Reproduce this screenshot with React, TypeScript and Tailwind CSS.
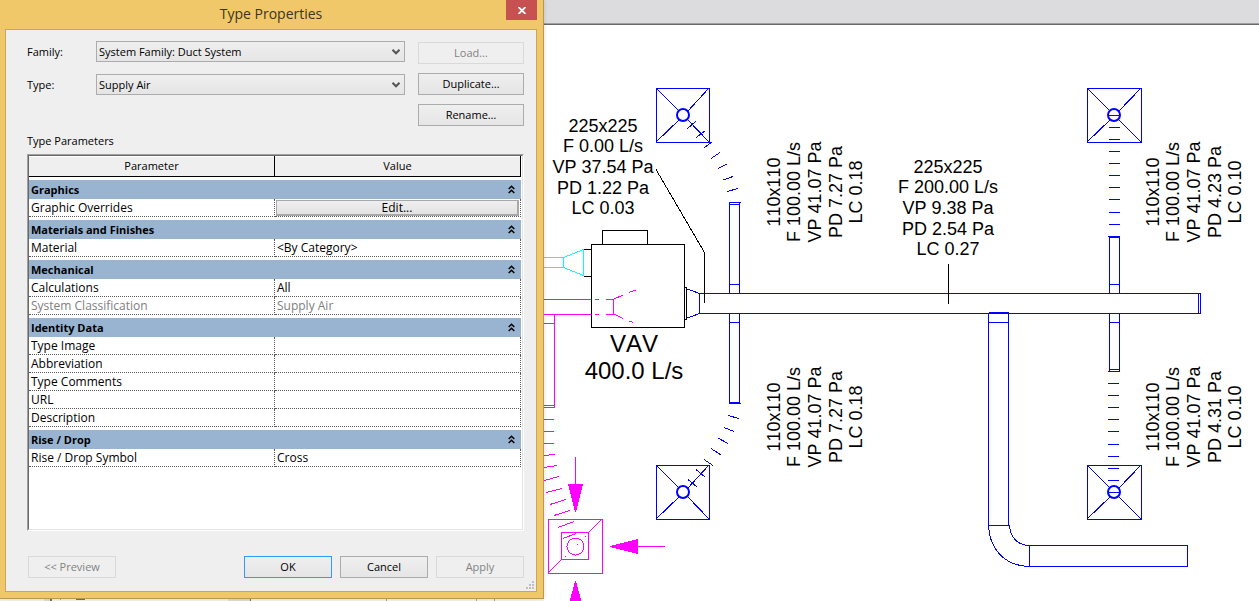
import { useState, type ReactNode } from "react";

const UI_FONT = "font-['Open_Sans','Noto_Sans',sans-serif]";

type Param = { name: string; value?: string; muted?: boolean; edit?: boolean };
type Section = { title: string; params: Param[] };

const sections: Section[] = [
  { title: "Graphics", params: [{ name: "Graphic Overrides", edit: true }] },
  { title: "Materials and Finishes", params: [{ name: "Material", value: "<By Category>" }] },
  {
    title: "Mechanical",
    params: [
      { name: "Calculations", value: "All" },
      { name: "System Classification", value: "Supply Air", muted: true },
    ],
  },
  {
    title: "Identity Data",
    params: [
      { name: "Type Image" },
      { name: "Abbreviation" },
      { name: "Type Comments" },
      { name: "URL" },
      { name: "Description" },
    ],
  },
  { title: "Rise / Drop", params: [{ name: "Rise / Drop Symbol", value: "Cross" }] },
];

function DialogButton({
  children,
  disabled,
  primary,
  wide,
}: {
  children: ReactNode;
  disabled?: boolean;
  primary?: boolean;
  wide?: boolean;
}) {
  const look = disabled
    ? "border-[#d9d9d9] bg-[#efefef] text-[#838383]"
    : primary
      ? "border-[#3399ff] bg-linear-to-b from-[#efefef] to-[#e5e5e5] text-black"
      : "border-[#acacac] bg-linear-to-b from-[#efefef] to-[#e5e5e5] text-black";
  return (
    <button
      type="button"
      disabled={disabled}
      className={`flex h-[22px] items-center justify-center border text-[11px] leading-4 ${wide ? "w-[106px]" : "w-[88px]"} ${look}`}
    >
      {children}
    </button>
  );
}

function SelectRow({ id, label, value }: { id: string; label: string; value: string }) {
  return (
    <div className="flex items-center">
      <label htmlFor={id} className="w-[69px] text-[11px] leading-4">
        {label}
      </label>
      <div className="relative flex-1">
        <select
          id={id}
          className="block h-[21px] w-full appearance-none border border-[#acacac] bg-linear-to-b from-[#efefef] to-[#e5e5e5] pl-[2px] text-[11px] leading-4 text-black"
        >
          <option>{value}</option>
        </select>
        <svg
          className="pointer-events-none absolute top-[8px] right-[5px]"
          width="8"
          height="6"
          viewBox="0 0 8 6"
        >
          <path d="M0.5 0.8 L4 4.3 L7.5 0.8" fill="none" stroke="#555" strokeWidth="2" />
        </svg>
      </div>
    </div>
  );
}

function CollapseIcon() {
  return (
    <svg width="7" height="9" viewBox="0 0 7 9" fill="none" stroke="#000" strokeWidth="1.5">
      <path d="M0.7 4 L3.5 1.2 L6.3 4 M0.7 8 L3.5 5.2 L6.3 8" />
    </svg>
  );
}

function ParameterTable() {
  const [closed, setClosed] = useState<string[]>([]);
  const toggle = (title: string) =>
    setClosed((c) => (c.includes(title) ? c.filter((t) => t !== title) : [...c, title]));
  return (
    <table className="w-[492px] table-fixed border-separate border-spacing-0 text-[12px] leading-4">
      <thead>
        <tr className="bg-[#efefef]">
          <th className="h-[21px] w-[246px] border-r border-b border-black p-0 text-[11px] font-normal shadow-[inset_0_1px_0_#fff]">
            Parameter
          </th>
          <th className="h-[21px] border-r border-b border-black p-0 text-[11px] font-normal shadow-[inset_0_1px_0_#fff]">
            Value
          </th>
        </tr>
      </thead>
      {sections.map((s) => (
        <tbody key={s.title}>
          <tr>
            <th
              colSpan={2}
              className="h-[22px] border-t-[3px] border-white bg-[#99b4d1] bg-clip-padding p-0 text-left text-[11px] font-bold"
            >
              <div className="flex items-center justify-between pr-[6px] pl-[2px]">
                {s.title}
                <button type="button" aria-label={`Toggle ${s.title}`} onClick={() => toggle(s.title)}>
                  <CollapseIcon />
                </button>
              </div>
            </th>
          </tr>
          {!closed.includes(s.title) &&
            s.params.map((p) => (
              <tr key={p.name} className={p.muted ? "text-[#808080]" : "text-black"}>
                <td className="h-[18px] border-r border-b border-dotted border-[#5a5a5a] p-0 pl-[2px]">
                  {p.name}
                </td>
                <td className="h-[18px] border-r border-b border-dotted border-[#5a5a5a] p-0">
                  {p.edit ? (
                    <button
                      type="button"
                      className="mx-px mt-px block h-4 w-[243px] border border-r-2 border-b-2 border-[#a8a8a8] bg-linear-to-b from-[#efefef] to-[#e3e3e3] leading-[14px]"
                    >
                      Edit...
                    </button>
                  ) : (
                    <span className="pl-[2px]">{p.value}</span>
                  )}
                </td>
              </tr>
            ))}
        </tbody>
      ))}
    </table>
  );
}

function TypePropertiesDialog() {
  return (
    <section
      role="dialog"
      aria-labelledby="dialog-title"
      className={`relative w-[544px] border-r border-b border-[#b8994f] bg-[#f0c869] pb-[6px] pl-[5px] pr-[6px] text-black shadow-[0_0_4px_rgba(0,0,0,0.15)] ${UI_FONT}`}
    >
      <header className="flex h-[29px] items-start">
        <h1 id="dialog-title" className="flex-1 pt-[4px] pl-[31px] text-center text-[14px] leading-5 text-[#3e3420]">
          Type Properties
        </h1>
        <button
          type="button"
          aria-label="Close"
          className="flex h-5 w-[31px] items-center justify-center bg-[#c75050]"
        >
          <svg width="8" height="7" viewBox="0 0 8 7" stroke="#fff" strokeWidth="1.8">
            <path d="M0.5 0 L7.5 7 M7.5 0 L0.5 7" />
          </svg>
        </button>
      </header>
      <div className="relative border border-[#c9a758] bg-[#efefef] pt-[11px] pr-3 pb-[13px] pl-[21px]">
        <div className="flex gap-[13px]">
          <div className="flex flex-1 flex-col gap-3">
            <SelectRow id="family" label="Family:" value="System Family: Duct System" />
            <SelectRow id="type" label="Type:" value="Supply Air" />
          </div>
          <div className="flex flex-col gap-[9px] pt-px">
            <DialogButton wide disabled>Load…</DialogButton>
            <DialogButton wide>Duplicate…</DialogButton>
            <DialogButton wide>Rename…</DialogButton>
          </div>
        </div>
        <h2 className="mt-[7px] text-[11px] leading-4">Type Parameters</h2>
        <div className="mt-[5px] h-[377px] border border-t-[#a0a0a0] border-r-white border-b-white border-l-[#a0a0a0]">
          <div className="h-full border border-t-[#696969] border-r-[#e3e3e3] border-b-[#e3e3e3] border-l-[#696969] bg-white">
            <ParameterTable />
          </div>
        </div>
        <footer className="mt-[25px] flex gap-2 pl-px">
          <div className="flex-1">
            <DialogButton disabled>&lt;&lt; Preview</DialogButton>
          </div>
          <DialogButton primary>OK</DialogButton>
          <DialogButton>Cancel</DialogButton>
          <DialogButton disabled>Apply</DialogButton>
        </footer>
        <svg className="absolute right-[2px] bottom-[2px]" width="8" height="8" viewBox="0 0 8 8" fill="#bfbfbf">
          <path d="M6 0h2v2h-2z M3 3h2v2h-2z M6 3h2v2h-2z M0 6h2v2h-2z M3 6h2v2h-2z M6 6h2v2h-2z" />
        </svg>
      </div>
    </section>
  );
}

type TagProps = { x: number; y: number; lines: string[]; vertical?: boolean };

const lineOffsets = [0, 20, 41, 62, 82];

function Tag({ x, y, lines, vertical }: TagProps) {
  return (
    <g transform={vertical ? `translate(${x} ${y}) rotate(-90)` : `translate(${x} ${y})`}>
      {lines.map((line, i) => (
        <text key={line} x={0} y={lineOffsets[i]} textAnchor="middle" fontSize="18">
          {line}
        </text>
      ))}
    </g>
  );
}

function Diffuser({ x, y, w }: { x: number; y: number; w: number }) {
  const cx = x + 27;
  const cy = y + 27;
  return (
    <g>
      <rect x={x + 0.5} y={y + 0.5} width={w} height={54} />
      <path
        d={`M${x} ${y} L${cx - 4} ${cy - 4} M${x + w} ${y} L${cx + 5} ${cy - 4} M${x} ${y + 54} L${cx - 4} ${cy + 5} M${x + w} ${y + 54} L${cx + 5} ${cy + 5}`}
      />
      <circle cx={cx} cy={cy} r="6" strokeWidth="2" shapeRendering="auto" />
    </g>
  );
}

const ticksUpper = [115, 127, 139, 151, 163, 175, 187, 199, 212, 224];
const ticksLower = [383, 395, 407, 419, 431, 444, 456, 468, 480, 492];

function DuctPlan() {
  return (
    <svg
      className="block h-[576px] w-[715px] font-['Liberation_Sans',Arial,sans-serif] [font-kerning:none]"
      viewBox="544 25 715 576"
      role="img"
      aria-label="Supply air duct plan"
    >
      <g fill="none" strokeWidth="1" shapeRendering="crispEdges">
        <g stroke="#00ffff">
          <path d="M544 257.5 H563.5 V267.5 H544 M563.5 257.5 L583.5 249.5 V275.5 L563.5 267.5" />
        </g>

        <g stroke="#ff00ff">
          <path d="M544 299.5 H591 M544 314.5 H591 M595 299.5 H599 M606 299.5 H613.5 V314.5 H606 M595 314.5 H599" />
          <path d="M614 299 L623 295 M629 292.5 L636 290 M614 314 L623 318.5 M629 321 L633 322.5" />
          <path d="M554.5 314 V407.5 H544 M544 405.5 H554 M544 323.5 H554" />
          <path d="M544 419.5 H554 M544 431.5 H554 M544 443.5 H554 M544 455.5 L555 454.5 M544 467.5 L557 465.5 M544 480.5 L559 476.5 M546 492.5 L562 488.5 M550 504.5 L566 499.5 M554 515.5 L570 510.5 M558 527.5 L574 521.5 M563 538.5 L576 533.5" />
          <rect x="548.5" y="519.5" width="54" height="54" />
          <rect x="561.5" y="532.5" width="27" height="27" />
          <circle cx="575.5" cy="546.5" r="8.5" />
          <path d="M602 519 L588 533 M548 573 L561 560" />
          <path d="M585 536.5 h1 M577 544.5 h1 M565 556.5 h1" />
          <path d="M575.5 457 V484 M638 546.5 H665" />
          <path d="M568 484 H583 L576 512 H575 Z M638 539 V554 L610 547 V546 Z M575 581 H576 L582 604 H569 Z" fill="#ff00ff" stroke="none" />
        </g>

        <g stroke="#0000ff">
          <Diffuser x={656} y={88} w={53} />
          <Diffuser x={656} y={465} w={53} />
          <Diffuser x={1087} y={88} w={54} />
          <Diffuser x={1087} y={465} w={54} />
          <path d="M687 129 L696 121 M696 137.5 L705 131 M704 148 L712 142 M711 158.5 L720 152.5 M718 168.5 L727 164 M723 180 L733 176.5 M727 191.5 L738 188.5" />
          <path d="M728 415.5 L739 418.5 M724 427.5 L734 431.5 M718 438 L728 443.5 M711 448.5 L721 455 M704 459.5 L713 465.5 M696 469.5 L705 477 M688 479.5 L697 487" />
          {ticksUpper.map((y) => (
            <path key={y} d={`M1109 ${y + 0.5} H1120`} />
          ))}
          {ticksLower.map((y) => (
            <path key={y} d={`M1108 ${y + 0.5} H1119`} />
          ))}
          <path d="M686 288.5 L699.5 293.5 H1200.5 V313.5 H699.5 L686 318.5 M699.5 293 V314 M1198.5 293 V313" />
          <path d="M729.5 293 V202.5 H741 M739.5 293 V203 M730 204.5 H739 M730 284.5 H739" />
          <path d="M729.5 314 V402.5 H739.5 V314 M729 403.5 H741 M730 322.5 H739" />
          <path d="M1109.5 293 V236 M1119.5 293 V236 M1108 236.5 H1120 M1109 237.5 H1120 M1110 284.5 H1119" />
          <path d="M1109.5 314 V371 M1119.5 314 V371 M1110 369.5 H1119 M1108 371.5 H1120 M1110 322.5 H1119" />
          <path d="M988.5 314 V525.5 H1008.5 V312.5 H989 M988 322.5 H1008" />
          <path d="M988.5 525 C989 548 1004 566 1029.5 566.5 M1009.5 525 C1010 537 1017 545 1029.5 545.5" />
          <path d="M1029.5 545.5 H1187.5 V566.5 H1029.5 Z" />
        </g>

        <g stroke="#000">
          <rect x="591.5" y="244.5" width="93" height="83" />
          <path d="M602.5 244 V230.5 H647.5 V244 M584 249.5 H591 M584 276.5 H591 M684 287.5 H686.5 V319.5 H684" />
          <path d="M656 169.5 L704.5 252.5 V303 M948.5 264 V304" />
        </g>
      </g>

      <g fill="#000">
        <Tag x={603} y={132} lines={["225x225", "F 0.00 L/s", "VP 37.54 Pa", "PD 1.22 Pa", "LC 0.03"]} />
        <Tag x={948} y={173} lines={["225x225", "F 200.00 L/s", "VP 9.38 Pa", "PD 2.54 Pa", "LC 0.27"]} />
        <Tag vertical x={780} y={192} lines={["110x110", "F 100.00 L/s", "VP 41.07 Pa", "PD 7.27 Pa", "LC 0.18"]} />
        <Tag vertical x={780} y={417} lines={["110x110", "F 100.00 L/s", "VP 41.07 Pa", "PD 7.27 Pa", "LC 0.18"]} />
        <Tag vertical x={1159} y={192} lines={["110x110", "F 100.00 L/s", "VP 41.07 Pa", "PD 4.23 Pa", "LC 0.10"]} />
        <Tag vertical x={1159} y={417} lines={["110x110", "F 100.00 L/s", "VP 41.07 Pa", "PD 4.31 Pa", "LC 0.10"]} />
        <text x="634" y="352" textAnchor="middle" fontSize="24">VAV</text>
        <text x="634" y="379" textAnchor="middle" fontSize="24">400.0 L/s</text>
      </g>
    </svg>
  );
}

export default function App() {
  return (
    <main className="flex min-h-screen items-start overflow-hidden bg-white">
      <div className="relative z-10 shrink-0">
        <TypePropertiesDialog />
        <svg className="block h-[2px] w-[544px]" viewBox="0 0 544 2" shapeRendering="crispEdges" aria-hidden="true">
          <rect width="544" height="2" fill="#f8f5ee" />
          <path d="M50 0h2v2h-2z M76 0h9v1h-9z M250 0h1v2h-1z" fill="#77736a" />
          <path d="M60 0h1v1h-1z M386 0h1v2h-1z M476 0h1v2h-1z M494 0h1v2h-1z" fill="#aaa69c" />
          <path d="M44 0h6v2h-6z M228 0h22v2h-22z" fill="#e2dfd8" />
        </svg>
      </div>
      <div className="min-w-0 flex-1">
        <div className="h-[25px] border-b border-[#696969] bg-[#dcdcde] shadow-[inset_0_-1px_0_#a0a0a0]" />
        <DuctPlan />
      </div>
    </main>
  );
}
